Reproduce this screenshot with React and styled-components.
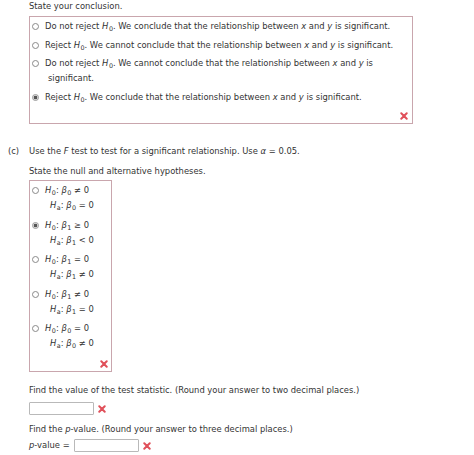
import styled, { createGlobalStyle } from 'styled-components';

const GlobalStyle = createGlobalStyle`
  html, body {
    margin: 0;
    padding: 0;
    background: #ffffff;
  }
  body {
    font-family: "DejaVu Sans", Verdana, sans-serif;
    font-size: 8.4px;
    color: #333333;
  }
`;

const conclusions = [
  { id: 1, pre: 'Do not reject', post: 'We conclude that the relationship between', tail: 'is significant.' },
  { id: 2, pre: 'Reject', post: 'We cannot conclude that the relationship between', tail: 'is significant.' },
  { id: 3, pre: 'Do not reject', post: 'We cannot conclude that the relationship between', tail: 'is significant.' },
  { id: 4, pre: 'Reject', post: 'We conclude that the relationship between', tail: 'is significant.', checked: true },
];

const hypotheses = [
  { id: 1, b0: '0', op0: '≠', b1: '0', op1: '=' },
  { id: 2, b0: '1', op0: '≥', b1: '1', op1: '<', checked: true },
  { id: 3, b0: '1', op0: '=', b1: '1', op1: '≠' },
  { id: 4, b0: '1', op0: '≠', b1: '1', op1: '=' },
  { id: 5, b0: '0', op0: '=', b1: '0', op1: '≠' },
];

const WrongMark = () => (
  <St.Mark viewBox="0 0 10 10">
    <path d="M1.6 1.6 L8.4 8.4 M8.4 1.6 L1.6 8.4" stroke="#e0505a" strokeWidth="2.5" strokeLinecap="round" />
  </St.Mark>
);

const H = ({ sub }) => (
  <St.Math>
    H<St.Sub>{sub}</St.Sub>
  </St.Math>
);

const Beta = ({ sub }) => (
  <St.Math>
    β<St.Sub>{sub}</St.Sub>
  </St.Math>
);

const App = () => {
  return (
    <>
      <GlobalStyle />
      <St.Page>
        <St.Block>
          <St.Prompt>State your conclusion.</St.Prompt>
          <St.AnswerBox width="384">
            <St.OptionList>
              {conclusions.map(item => (
                <St.Option key={item.id}>
                  <St.Radio checked={item.checked} />
                  <St.OptionText>
                    {item.pre} <H sub="0" />. {item.post} <St.Math>x</St.Math> and{' '}
                    <St.Math>y</St.Math> {item.tail}
                  </St.OptionText>
                </St.Option>
              ))}
            </St.OptionList>
            <St.BoxFooter top="7" bottom="3">
              <WrongMark />
            </St.BoxFooter>
          </St.AnswerBox>
        </St.Block>

        <St.Part>
          <St.PartLabel>(c)</St.PartLabel>
          <St.PartBody>
            <St.Line after="5">
              Use the <St.Math>F</St.Math> test to test for a significant relationship. Use{' '}
              <St.Math>α</St.Math> = 0.05.
            </St.Line>
            <St.Line>State the null and alternative hypotheses.</St.Line>
            <St.AnswerBox width="83" top="1.5">
              <St.OptionList gap="4.5">
                {hypotheses.map(item => (
                  <St.Option key={item.id}>
                    <St.Radio checked={item.checked} />
                    <St.HypText>
                      <St.HypLine>
                        <H sub="0" />: <Beta sub={item.b0} /> {item.op0} 0
                      </St.HypLine>
                      <St.HypLine indent="5">
                        <H sub="a" />: <Beta sub={item.b1} /> {item.op1} 0
                      </St.HypLine>
                    </St.HypText>
                  </St.Option>
                ))}
              </St.OptionList>
              <St.BoxFooter top="9" bottom="3" pad="3">
                <WrongMark />
              </St.BoxFooter>
            </St.AnswerBox>

            <St.Question>
              Find the value of the test statistic. (Round your answer to two decimal places.)
            </St.Question>
            <St.InputRow>
              <St.Input />
              <WrongMark />
            </St.InputRow>

            <St.Question top="6">
              Find the <St.Math>p</St.Math>-value. (Round your answer to three decimal places.)
            </St.Question>
            <St.InputRow top="1">
              <span>
                <St.Math>p</St.Math>-value =
              </span>
              <St.Input />
              <WrongMark />
            </St.InputRow>
          </St.PartBody>
        </St.Part>
      </St.Page>
    </>
  );
};

const St = {
  Page: styled.div`
    display: flex;
    flex-direction: column;
    padding: 0 8px;
    width: 474px;
    box-sizing: border-box;
  `,
  Block: styled.section`
    display: flex;
    flex-direction: column;
    padding-left: 21px;
  `,
  Prompt: styled.div`
    height: 12px;
    line-height: 12px;
    margin-bottom: 4px;
  `,
  AnswerBox: styled.div`
    display: flex;
    flex-direction: column;
    box-sizing: border-box;
    width: ${props => props.width}px;
    margin-top: ${props => props.top || 0}px;
    border: 1px solid #c9a6ad;
    padding: 2px 0 0 2px;
  `,
  OptionList: styled.div`
    display: flex;
    flex-direction: column;
    gap: ${props => props.gap || '3.5'}px;
  `,
  Option: styled.label`
    display: flex;
    align-items: flex-start;
    line-height: 15px;
  `,
  Radio: styled.span`
    flex: none;
    box-sizing: border-box;
    width: 7px;
    height: 7px;
    margin: 4px 6px 0 0;
    border-radius: 50%;
    border: 1px solid #8a8a8a;
    background: #ffffff;

    ${props =>
      props.checked &&
      `
      border-color: #9a9a9a;
      background: radial-gradient(circle, #555 0, #555 1.6px, #e4e4e4 2.1px);
    `};
  `,
  OptionText: styled.span`
    padding-left: 3px;
    text-indent: -3px;
    padding-right: 8px;
  `,
  HypText: styled.div`
    display: flex;
    flex-direction: column;
  `,
  HypLine: styled.div`
    height: 15px;
    line-height: 15px;
    white-space: nowrap;
    padding-left: ${props => props.indent || 0}px;
  `,
  Math: styled.i`
    font-style: italic;
  `,
  Sub: styled.sub`
    font-size: 6.4px;
    font-style: normal;
    vertical-align: -2px;
    line-height: 0;
    margin-left: 0.5px;
  `,
  BoxFooter: styled.div`
    display: flex;
    justify-content: flex-end;
    padding: ${props => props.top}px ${props => props.pad || '4'}px ${props => props.bottom}px 0;
  `,
  Mark: styled.svg`
    display: block;
    width: 8px;
    height: 8px;
    flex: none;
  `,
  Part: styled.section`
    display: flex;
    margin-top: 20px;
  `,
  PartLabel: styled.div`
    width: 21px;
    flex: none;
    line-height: 15px;
  `,
  PartBody: styled.div`
    display: flex;
    flex-direction: column;
  `,
  Line: styled.div`
    height: 15px;
    line-height: 15px;
    margin-bottom: ${props => props.after || 0}px;
  `,
  Question: styled.div`
    height: 15px;
    line-height: 15px;
    margin-top: ${props => props.top || 11}px;
  `,
  InputRow: styled.div`
    display: flex;
    align-items: center;
    gap: 4px;
    margin-top: ${props => props.top || 3}px;
    height: 15px;
    line-height: 15px;
  `,
  Input: styled.input`
    box-sizing: border-box;
    width: 65px;
    height: 13px;
    border: 1px solid #b9b9b9;
    border-radius: 1px;
    padding: 0 2px;
    outline: none;
    font-family: inherit;
    font-size: inherit;
  `,
};

export default App;
